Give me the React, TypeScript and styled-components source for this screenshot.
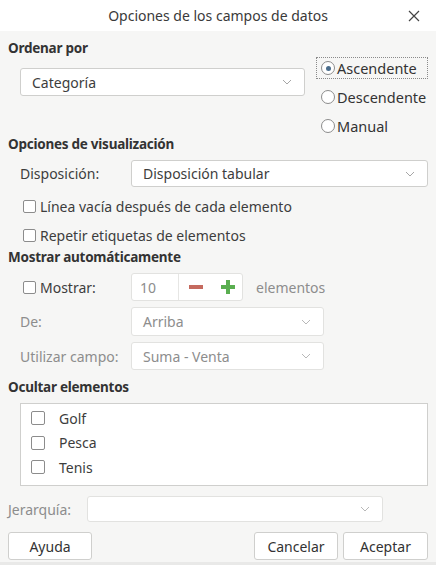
import React from "react";
import styled, { createGlobalStyle } from "styled-components";

const Global = createGlobalStyle`
  html, body { margin: 0; padding: 0; background: #f6f6f5; }
  body { font-family: "Noto Sans", "Open Sans", sans-serif; font-size: 14px; color: #3d3d3d; }
  * { box-sizing: border-box; }
`;

const Dialog = styled.div`
  width: 436px;
  height: 565px;
  display: flex;
  flex-direction: column;
  background: #f6f6f5;
  overflow: hidden;
`;

const TitleBar = styled.div`
  height: 31px;
  flex: none;
  background: #ffffff;
  display: grid;
  grid-template-columns: 40px 1fr 40px;
  align-items: center;
`;

const Title = styled.div`
  grid-column: 2;
  text-align: center;
  font-size: 14px;
  color: #3a3a3a;
  line-height: 30px;
`;

const CloseBtn = styled.div`
  display: flex;
  align-items: center;
  justify-content: center;
  height: 30px;
  padding-right: 4px;
`;

const Body = styled.div`
  flex: 1;
  display: flex;
  flex-direction: column;
  padding: 0 8px;
`;

const Header = styled.div<{ $mt?: number }>`
  font-weight: 700;
  font-size: 13.5px;
  letter-spacing: -0.25px;
  line-height: 18px;
  color: #333;
  margin-top: ${(p) => p.$mt ?? 0}px;
`;

const SortSection = styled.div`
  display: flex;
  align-items: flex-start;
  gap: 12px;
`;

const SortLeft = styled.div`
  flex: 1;
  display: flex;
  flex-direction: column;
  padding-top: 8px;
`;

const RadioColumn = styled.div`
  width: 111px;
  display: flex;
  flex-direction: column;
  gap: 7px;
  padding-top: 26px;
`;

const RadioItem = styled.div<{ $focus?: boolean }>`
  height: 22px;
  display: flex;
  align-items: center;
  gap: 2px;
  padding-left: 4px;
  font-size: 14.5px;
  color: #333;
  border: 1px dotted ${(p) => (p.$focus ? "#8a8a8a" : "transparent")};
  margin-left: -1px;
`;

const RadioCircle = styled.span<{ $on?: boolean }>`
  width: 14px;
  height: 14px;
  border-radius: 50%;
  border: 1px solid #8c8c8c;
  background: #fff;
  display: flex;
  align-items: center;
  justify-content: center;
  &::after {
    content: "";
    width: 5px;
    height: 5px;
    border-radius: 50%;
    background: ${(p) => (p.$on ? "#4a6d8c" : "transparent")};
  }
`;

const Combo = styled.div<{ $w?: number; $h?: number; $disabled?: boolean; $mt?: number }>`
  height: ${(p) => p.$h ?? 28}px;
  ${(p) => (p.$w ? `width: ${p.$w}px;` : "flex: 1;")}
  margin-top: ${(p) => p.$mt ?? 0}px;
  background: #ffffff;
  border: 1px solid ${(p) => (p.$disabled ? "#e2e2e0" : "#cfcfcd")};
  border-radius: 3px;
  display: flex;
  align-items: center;
  justify-content: space-between;
  padding: 0 12px 0 11px;
  color: ${(p) => (p.$disabled ? "#8d8d8d" : "#3d3d3d")};
  font-size: 14px;
`;

const Chevron = ({ faded }: { faded?: boolean }) => (
  <svg width="10" height="6" viewBox="0 0 10 6">
    <path d="M1 1 L5 5 L9 1" fill="none" stroke={faded ? "#b8b8b8" : "#a6a6a6"} strokeWidth="1" />
  </svg>
);

const Row = styled.div<{ $mt?: number; $pl?: number }>`
  display: flex;
  align-items: center;
  margin-top: ${(p) => p.$mt ?? 0}px;
  padding-left: ${(p) => p.$pl ?? 12}px;
`;

const Label = styled.div<{ $w?: number; $disabled?: boolean }>`
  width: ${(p) => p.$w ?? 111}px;
  flex: none;
  color: ${(p) => (p.$disabled ? "#8d8d8d" : "#3d3d3d")};
  font-size: 14px;
`;

const CheckRow = styled.div<{ $mt?: number }>`
  height: 22px;
  display: flex;
  align-items: center;
  gap: 4px;
  padding-left: 15px;
  margin-top: ${(p) => p.$mt ?? 0}px;
  font-size: 14px;
  color: #3d3d3d;
`;

const Box = styled.span<{ $size?: number }>`
  width: ${(p) => p.$size ?? 13}px;
  height: ${(p) => p.$size ?? 13}px;
  flex: none;
  border: 1px solid #8c8c8c;
  border-radius: 2px;
  background: #fff;
`;

const ShowLabel = styled.div`
  width: 111px;
  display: flex;
  align-items: center;
  gap: 4px;
  padding-left: 3px;
  flex: none;
`;

const Spin = styled.div`
  width: 112px;
  height: 28px;
  display: flex;
  background: #fff;
  border: 1px solid #e2e2e0;
  border-radius: 3px;
`;

const SpinValue = styled.div`
  width: 47px;
  border-right: 1px solid #e6e6e4;
  display: flex;
  align-items: center;
  padding-left: 8px;
  color: #8d8d8d;
`;

const SpinButtons = styled.div`
  flex: 1;
  display: flex;
  align-items: center;
  gap: 18px;
  padding-left: 10px;
`;

const Units = styled.div`
  margin-left: 13px;
  color: #8d8d8d;
`;

const ListBox = styled.div`
  margin: 7px 0 0 12px;
  height: 83px;
  background: #fff;
  border: 1px solid #cfcfcd;
  display: flex;
  flex-direction: column;
  padding-top: 2px;
`;

const ListItem = styled.div`
  height: 24.5px;
  display: flex;
  align-items: center;
  padding-left: 10px;
  gap: 14px;
  color: #3d3d3d;
`;

const ButtonBar = styled.div`
  display: flex;
  gap: 5px;
  margin-top: 10px;
`;

const Button = styled.button<{ $push?: boolean; $w?: number }>`
  width: ${(p) => p.$w ?? 84}px;
  height: 28px;
  font-family: inherit;
  font-size: 14px;
  color: #333;
  background: #fff;
  border: 1px solid #cfcfcd;
  border-radius: 3px;
  padding: 0;
  ${(p) => (p.$push ? "margin-left: auto;" : "")}
`;

const BottomStrip = styled.div`
  height: 3px;
  flex: none;
  background: #e9e9e8;
  margin-top: auto;
`;

export default function App() {
  return (
    <>
      <Global />
      <Dialog>
        <TitleBar>
          <Title>Opciones de los campos de datos</Title>
          <CloseBtn>
            <svg width="12" height="12" viewBox="0 0 12 12">
              <path d="M1 1 L11 11 M11 1 L1 11" stroke="#444" strokeWidth="1.2" />
            </svg>
          </CloseBtn>
        </TitleBar>
        <Body>
          <SortSection>
            <SortLeft>
              <Header>Ordenar por</Header>
              <Row $mt={11}>
                <Combo $h={28}>
                  <span>Categoría</span>
                  <Chevron />
                </Combo>
              </Row>
            </SortLeft>
            <RadioColumn>
              <RadioItem $focus>
                <RadioCircle $on />
                Ascendente
              </RadioItem>
              <RadioItem>
                <RadioCircle />
                Descendente
              </RadioItem>
              <RadioItem>
                <RadioCircle />
                Manual
              </RadioItem>
            </RadioColumn>
          </SortSection>

          <Header $mt={-2}>Opciones de visualización</Header>
          <Row $mt={7}>
            <Label>Disposición:</Label>
            <Combo $h={27}>
              <span>Disposición tabular</span>
              <Chevron />
            </Combo>
          </Row>
          <CheckRow $mt={8}>
            <Box />
            Línea vacía después de cada elemento
          </CheckRow>
          <CheckRow $mt={7}>
            <Box />
            Repetir etiquetas de elementos
          </CheckRow>

          <Header $mt={2}>Mostrar automáticamente</Header>
          <Row $mt={7}>
            <ShowLabel>
              <Box />
              Mostrar:
            </ShowLabel>
            <Spin>
              <SpinValue>10</SpinValue>
              <SpinButtons>
                <svg width="14" height="14" viewBox="0 0 14 14">
                  <rect x="0" y="5" width="14" height="4" fill="#c56a5f" />
                </svg>
                <svg width="14" height="14" viewBox="0 0 14 14">
                  <path d="M5 0 H9 V5 H14 V9 H9 V14 H5 V9 H0 V5 H5 Z" fill="#5aae50" />
                </svg>
              </SpinButtons>
            </Spin>
            <Units>elementos</Units>
          </Row>
          <Row $mt={6}>
            <Label $disabled>De:</Label>
            <Combo $w={193} $h={29} $disabled>
              <span>Arriba</span>
              <Chevron faded />
            </Combo>
          </Row>
          <Row $mt={6}>
            <Label $disabled>Utilizar campo:</Label>
            <Combo $w={193} $h={28} $disabled>
              <span>Suma - Venta</span>
              <Chevron faded />
            </Combo>
          </Row>

          <Header $mt={8}>Ocultar elementos</Header>
          <ListBox>
            {["Golf", "Pesca", "Tenis"].map((t) => (
              <ListItem key={t}>
                <Box $size={14} />
                {t}
              </ListItem>
            ))}
          </ListBox>

          <Row $mt={10} $pl={0}>
            <Label $w={79} $disabled>
              Jerarquía:
            </Label>
            <Combo $w={296} $h={26} $disabled>
              <span />
              <Chevron faded />
            </Combo>
          </Row>

          <ButtonBar>
            <Button>Ayuda</Button>
            <Button $push>Cancelar</Button>
            <Button $w={85}>Aceptar</Button>
          </ButtonBar>
        </Body>
        <BottomStrip />
      </Dialog>
    </>
  );
}
